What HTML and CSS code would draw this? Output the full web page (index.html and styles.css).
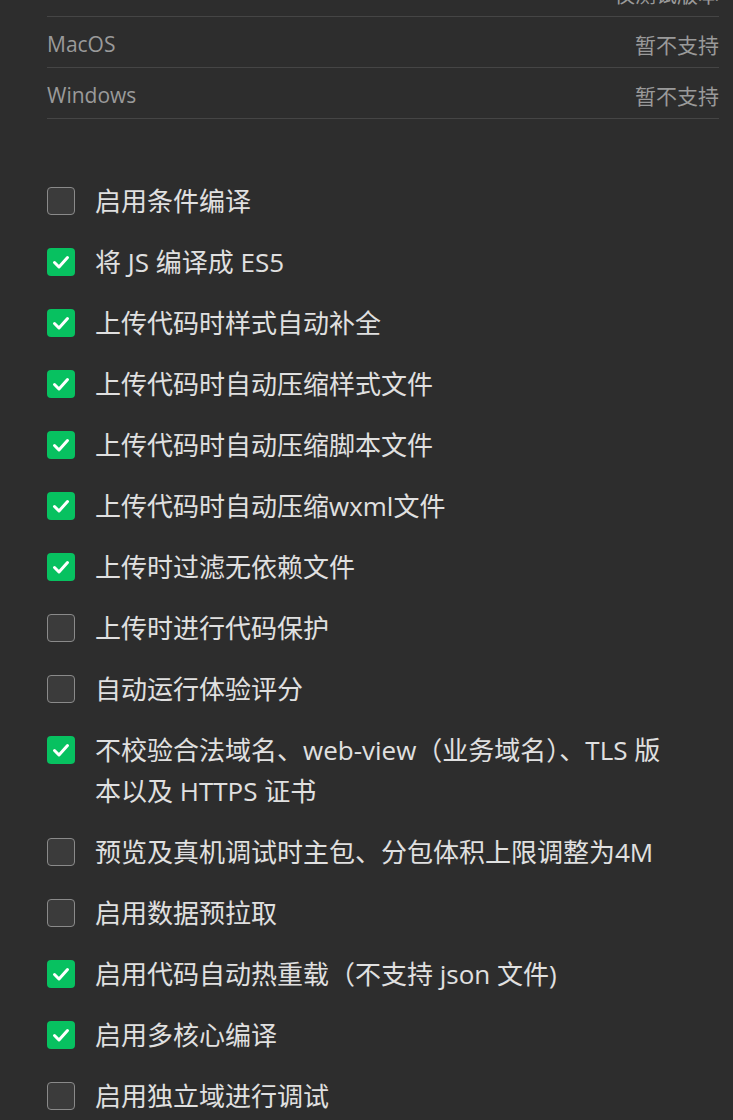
FILE: index.html
```html
<!DOCTYPE html>
<html lang="zh-CN">
<head>
  <meta charset="UTF-8">
  <title>项目设置</title>
  <link rel="stylesheet" href="styles.css">
</head>
<body>
  <div class="panel">
    <!-- Platform support -->
    <div class="info-list">
      <div class="info-row"><span></span><span class="info-value">仅测试版本</span></div>
      <div class="info-row"><span>MacOS</span><span class="info-value">暂不支持</span></div>
      <div class="info-row"><span>Windows</span><span class="info-value">暂不支持</span></div>
    </div>

    <!-- Compile options -->
    <div class="options" id="options"></div>
  </div>

  <script>
    const options = [
      { label: '启用条件编译', checked: false },
      { label: '将 JS 编译成 ES5', checked: true },
      { label: '上传代码时样式自动补全', checked: true },
      { label: '上传代码时自动压缩样式文件', checked: true },
      { label: '上传代码时自动压缩脚本文件', checked: true },
      { label: '上传代码时自动压缩wxml文件', checked: true },
      { label: '上传时过滤无依赖文件', checked: true },
      { label: '上传时进行代码保护', checked: false },
      { label: '自动运行体验评分', checked: false },
      { label: '不校验合法域名、web-view（业务域名）、TLS 版本以及 HTTPS 证书', checked: true },
      { label: '预览及真机调试时主包、分包体积上限调整为4M', checked: false },
      { label: '启用数据预拉取', checked: false },
      { label: '启用代码自动热重载（不支持 json 文件)', checked: true },
      { label: '启用多核心编译', checked: true },
      { label: '启用独立域进行调试', checked: false }
    ];

    const tick = '<svg viewBox="0 0 28 28" width="28" height="28"><path d="M7.5 14.5l4.5 4.5 8.5-9.5" fill="none" stroke="#fff" stroke-width="3" stroke-linecap="round" stroke-linejoin="round"/></svg>';

    const container = document.getElementById('options');
    options.forEach(opt => {
      const row = document.createElement('label');
      row.className = 'option';
      row.innerHTML = `
        <span class="checkbox ${opt.checked ? 'checked' : ''}">${opt.checked ? tick : ''}</span>
        <span class="option-label">${opt.label}</span>
      `;
      container.appendChild(row);
    });
  </script>
</body>
</html>
```

FILE: styles.css
```css
/* General Styling */
body {
  margin: 0;
  padding: 0;
  background-color: #2d2d2d;
  font-family: "Open Sans", "Noto Sans CJK SC", sans-serif;
  overflow: hidden;
}

.panel {
  padding: 0 14px 0 47px;
}

/* Platform list */
.info-list {
  margin-top: -34px;
}

.info-row {
  display: flex;
  justify-content: space-between;
  align-items: center;
  box-sizing: border-box;
  height: 51px;
  padding-top: 3px;
  border-bottom: 1px solid #454545;
  color: #9a9a9a;
  font-size: 21px;
}

/* Options */
.options {
  display: flex;
  flex-direction: column;
  gap: 20px;
  margin-top: 62px;
}

.option {
  display: flex;
  align-items: flex-start;
  gap: 20px;
}

.checkbox {
  flex: none;
  width: 28px;
  height: 28px;
  margin-top: 6px;
  box-sizing: border-box;
  border: 1.5px solid #8a8a8a;
  border-radius: 4px;
  background: #3b3b3b;
}

.checkbox.checked {
  border: none;
  background: #07c160;
}

.checkbox svg {
  display: block;
}

.option-label {
  max-width: 590px;
  color: #e0e0e0;
  font-size: 26px;
  line-height: 41px;
}
```
